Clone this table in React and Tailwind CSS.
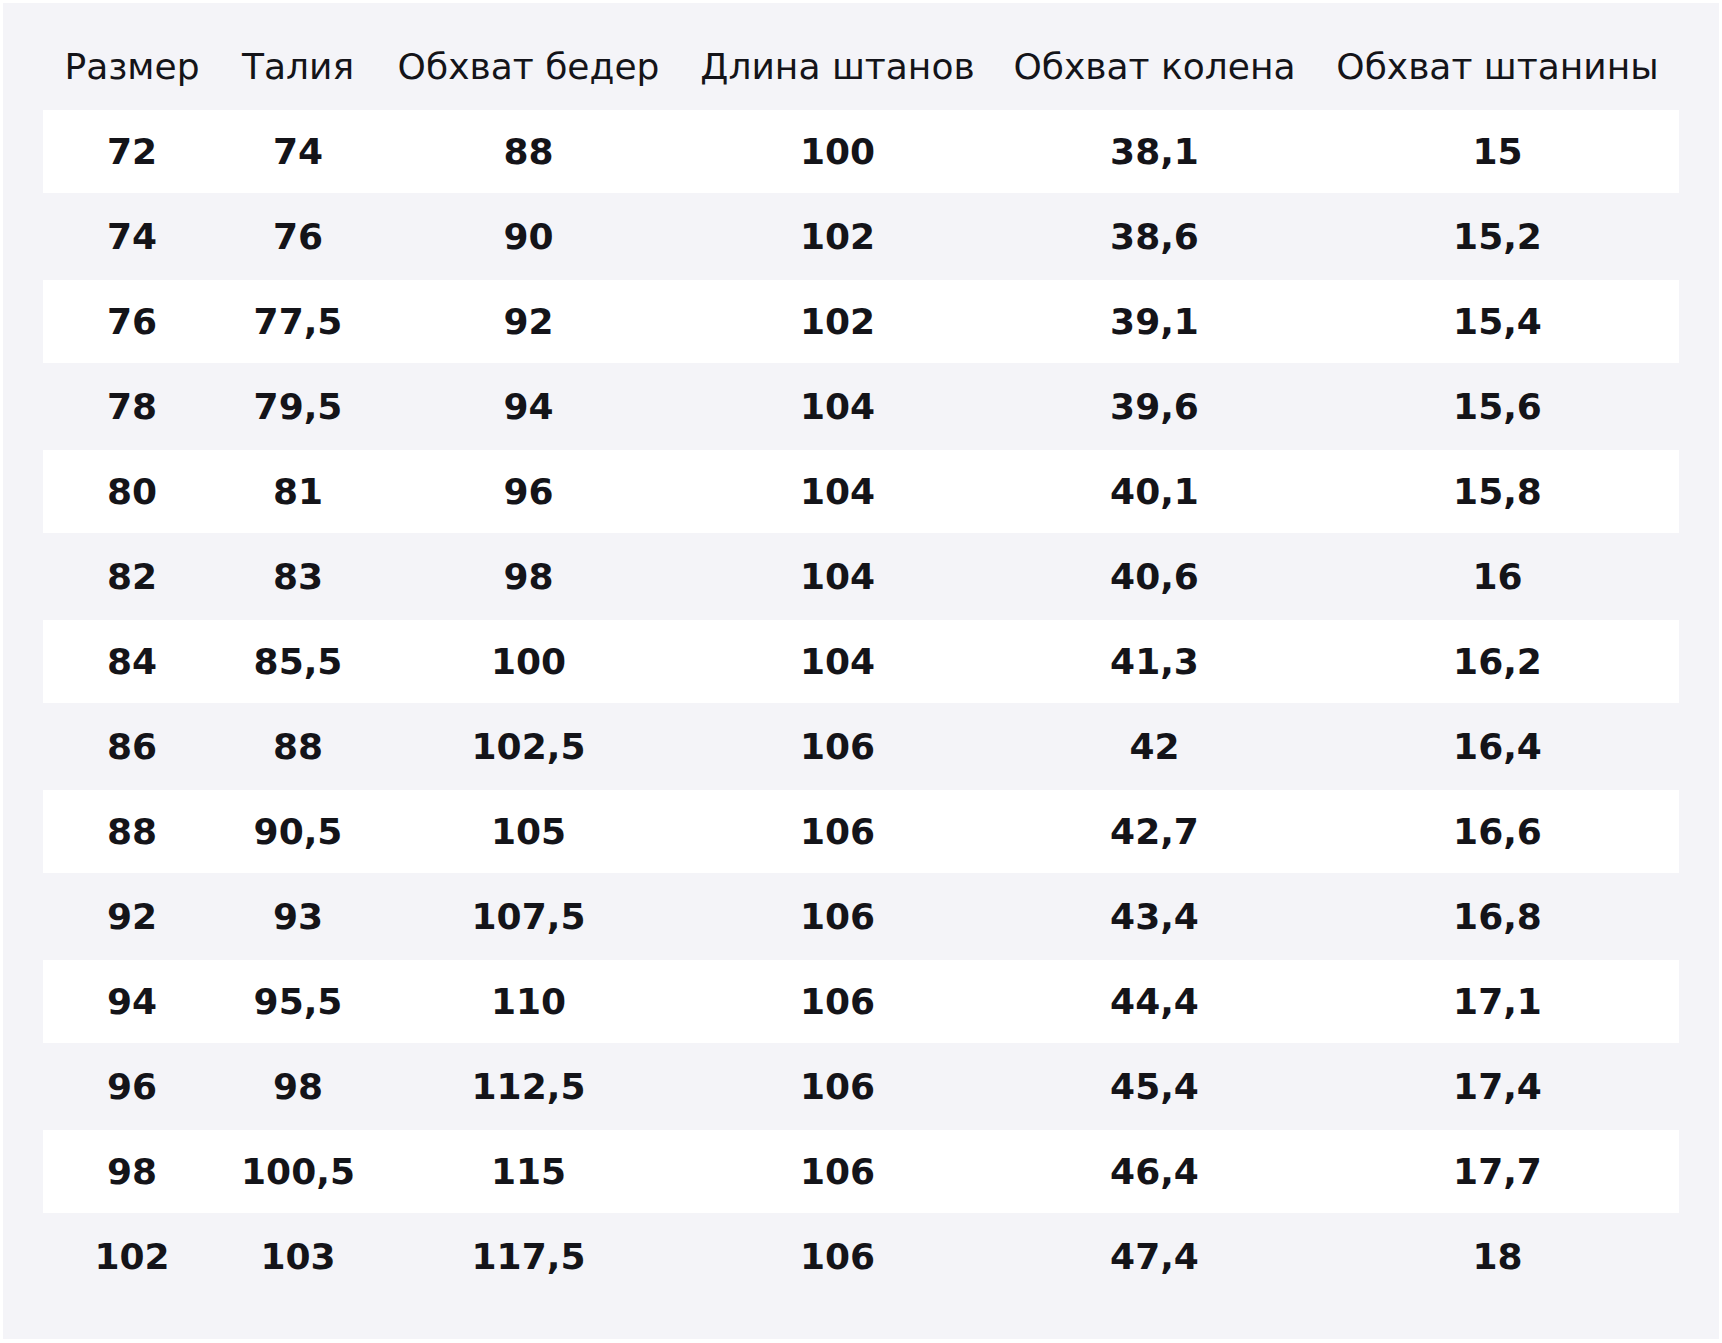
const headers = [
  "Размер",
  "Талия",
  "Обхват бедер",
  "Длина штанов",
  "Обхват колена",
  "Обхват штанины",
];

const rows = [
  ["72", "74", "88", "100", "38,1", "15"],
  ["74", "76", "90", "102", "38,6", "15,2"],
  ["76", "77,5", "92", "102", "39,1", "15,4"],
  ["78", "79,5", "94", "104", "39,6", "15,6"],
  ["80", "81", "96", "104", "40,1", "15,8"],
  ["82", "83", "98", "104", "40,6", "16"],
  ["84", "85,5", "100", "104", "41,3", "16,2"],
  ["86", "88", "102,5", "106", "42", "16,4"],
  ["88", "90,5", "105", "106", "42,7", "16,6"],
  ["92", "93", "107,5", "106", "43,4", "16,8"],
  ["94", "95,5", "110", "106", "44,4", "17,1"],
  ["96", "98", "112,5", "106", "45,4", "17,4"],
  ["98", "100,5", "115", "106", "46,4", "17,7"],
  ["102", "103", "117,5", "106", "47,4", "18"],
];

const cols = "grid grid-cols-[178px_154px_307px_311px_323px_363px]";

function App() {
  return (
    <div className="bg-white p-[3px] font-['DejaVu_Sans',sans-serif] text-[#141419]">
      <div className="h-[1336px] bg-[#f4f4f8] px-[40px] pt-[40px]">
        <div className={`${cols} h-[67px] pt-[4px]`}>
          {headers.map((h) => (
            <div key={h} className="text-center text-[36px] leading-[40px] whitespace-nowrap">
              {h}
            </div>
          ))}
        </div>
        {rows.map((r, i) => (
          <div
            key={i}
            className={`${cols} items-center ${
              i % 2 === 0 ? "h-[83px] bg-white" : "h-[87px]"
            }`}
          >
            {r.map((v, j) => (
              <div key={j} className="text-center text-[36px] font-bold leading-[40px]">
                {v}
              </div>
            ))}
          </div>
        ))}
      </div>
    </div>
  );
}

export default App;
